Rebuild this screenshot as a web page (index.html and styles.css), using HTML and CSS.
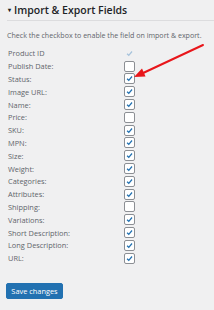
FILE: index.html
```html
<!DOCTYPE html>
<html>
<head>
    <meta charset="UTF-8">
    <title>Import &amp; Export Fields</title>
    <link rel="stylesheet" href="styles.css">
</head>
<body>
    <div class="panel">
        <h2 class="panel-title"><span class="caret">&#9662;</span>Import &amp; Export Fields</h2>
        <p class="hint">Check the checkbox to enable the field on import &amp; export.</p>

        <div class="fields">
            <div class="field"><span>Product ID</span><span class="box fixed"><svg viewBox="0 0 10 10"><path d="M2.3 5.2 L4.2 7 L7.8 2.8"/></svg></span></div>
            <div class="field"><span>Publish Date:</span><span class="box"></span></div>
            <div class="field"><span>Status:</span><span class="box on"><svg viewBox="0 0 10 10"><path d="M2.3 5.2 L4.2 7 L7.8 2.8"/></svg></span></div>
            <div class="field"><span>Image URL:</span><span class="box on"><svg viewBox="0 0 10 10"><path d="M2.3 5.2 L4.2 7 L7.8 2.8"/></svg></span></div>
            <div class="field"><span>Name:</span><span class="box on"><svg viewBox="0 0 10 10"><path d="M2.3 5.2 L4.2 7 L7.8 2.8"/></svg></span></div>
            <div class="field"><span>Price:</span><span class="box"></span></div>
            <div class="field"><span>SKU:</span><span class="box on"><svg viewBox="0 0 10 10"><path d="M2.3 5.2 L4.2 7 L7.8 2.8"/></svg></span></div>
            <div class="field"><span>MPN:</span><span class="box on"><svg viewBox="0 0 10 10"><path d="M2.3 5.2 L4.2 7 L7.8 2.8"/></svg></span></div>
            <div class="field"><span>Size:</span><span class="box on"><svg viewBox="0 0 10 10"><path d="M2.3 5.2 L4.2 7 L7.8 2.8"/></svg></span></div>
            <div class="field"><span>Weight:</span><span class="box on"><svg viewBox="0 0 10 10"><path d="M2.3 5.2 L4.2 7 L7.8 2.8"/></svg></span></div>
            <div class="field"><span>Categories:</span><span class="box on"><svg viewBox="0 0 10 10"><path d="M2.3 5.2 L4.2 7 L7.8 2.8"/></svg></span></div>
            <div class="field"><span>Attributes:</span><span class="box on"><svg viewBox="0 0 10 10"><path d="M2.3 5.2 L4.2 7 L7.8 2.8"/></svg></span></div>
            <div class="field"><span>Shipping:</span><span class="box"></span></div>
            <div class="field"><span>Variations:</span><span class="box on"><svg viewBox="0 0 10 10"><path d="M2.3 5.2 L4.2 7 L7.8 2.8"/></svg></span></div>
            <div class="field"><span>Short Description:</span><span class="box on"><svg viewBox="0 0 10 10"><path d="M2.3 5.2 L4.2 7 L7.8 2.8"/></svg></span></div>
            <div class="field"><span>Long Description:</span><span class="box on"><svg viewBox="0 0 10 10"><path d="M2.3 5.2 L4.2 7 L7.8 2.8"/></svg></span></div>
            <div class="field"><span>URL:</span><span class="box on"><svg viewBox="0 0 10 10"><path d="M2.3 5.2 L4.2 7 L7.8 2.8"/></svg></span></div>
        </div>

        <button class="save" type="button">Save changes</button>
    </div>

    <!-- annotation arrow drawn over the screenshot -->
    <svg class="arrow" width="214" height="310" viewBox="0 0 214 310">
        <line x1="203" y1="45" x2="141" y2="74" stroke="#e8161b" stroke-width="2" stroke-linecap="round"/>
        <polygon points="134,77 142,68.5 145.5,76.5" fill="#e8161b"/>
    </svg>
</body>
</html>
```

FILE: styles.css
```css
body {
    margin: 0;
    background-color: #f0f0f1;
    font-family: "Open Sans", Arial, sans-serif;
    color: #5f656b;
    width: 214px;
    height: 310px;
    overflow: hidden;
    position: relative;
}
.panel {
    padding: 4px 0 0 7px;
}
.panel-title {
    margin: 0;
    padding: 0 0 3px 1px;
    font-size: 10.5px;
    font-weight: 600;
    color: #1d2327;
    border-bottom: 1px solid #dcdcde;
    line-height: 13px;
}
.caret {
    display: inline-block;
    font-size: 6px;
    margin-right: 3px;
    vertical-align: 2px;
}
.hint {
    margin: 9px 0 7px 0;
    font-size: 7.1px;
    line-height: 10px;
}
.fields {
    padding-left: 1px;
}
.field {
    display: flex;
    align-items: center;
    height: 12.8px;
    font-size: 7.4px;
}
.field span:first-child {
    width: 116px;
}
.box {
    width: 9px;
    height: 9px;
    border: 1px solid #8c8f94;
    border-radius: 2px;
    background-color: #fff;
    display: flex;
}
.box svg {
    width: 9px;
    height: 9px;
}
.box path {
    fill: none;
    stroke: #2271b1;
    stroke-width: 1.4;
}
.box.fixed {
    border-color: transparent;
    background: none;
}
.box.fixed path {
    stroke: #a7c3dc;
}
.save {
    margin-top: 18px;
    margin-left: -1px;
    width: 57px;
    height: 16px;
    padding: 0;
    background-color: #2271b1;
    color: #fff;
    border: 1px solid #2271b1;
    border-radius: 2px;
    font-family: "Open Sans", Arial, sans-serif;
    font-size: 7.4px;
}
.arrow {
    position: absolute;
    left: 0;
    top: 0;
}
```
